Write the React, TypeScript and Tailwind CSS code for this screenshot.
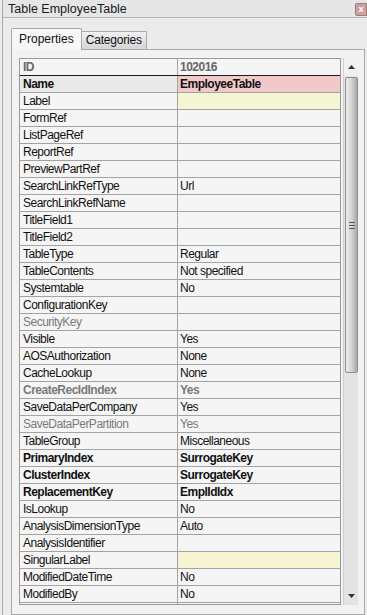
import React from "react";

type Row = {
  name: string;
  value?: string;
  bold?: boolean;
  dim?: boolean;
  bg?: string;
  header?: boolean;
};

const rows: Row[] = [
  { name: "ID", value: "102016", header: true },
  { name: "Name", value: "EmployeeTable", bold: true, bg: "pink" },
  { name: "Label", bg: "yellow" },
  { name: "FormRef" },
  { name: "ListPageRef" },
  { name: "ReportRef" },
  { name: "PreviewPartRef" },
  { name: "SearchLinkRefType", value: "Url" },
  { name: "SearchLinkRefName" },
  { name: "TitleField1" },
  { name: "TitleField2" },
  { name: "TableType", value: "Regular" },
  { name: "TableContents", value: "Not specified" },
  { name: "Systemtable", value: "No" },
  { name: "ConfigurationKey" },
  { name: "SecurityKey", dim: true },
  { name: "Visible", value: "Yes" },
  { name: "AOSAuthorization", value: "None" },
  { name: "CacheLookup", value: "None" },
  { name: "CreateRecIdIndex", value: "Yes", bold: true, dim: true },
  { name: "SaveDataPerCompany", value: "Yes" },
  { name: "SaveDataPerPartition", value: "Yes", dim: true },
  { name: "TableGroup", value: "Miscellaneous" },
  { name: "PrimaryIndex", value: "SurrogateKey", bold: true },
  { name: "ClusterIndex", value: "SurrogateKey", bold: true },
  { name: "ReplacementKey", value: "EmplIdIdx", bold: true },
  { name: "IsLookup", value: "No" },
  { name: "AnalysisDimensionType", value: "Auto" },
  { name: "AnalysisIdentifier" },
  { name: "SingularLabel", bg: "yellow" },
  { name: "ModifiedDateTime", value: "No" },
  { name: "ModifiedBy", value: "No" },
  { name: "ModifiedTransactionId", value: "No" },
];

function PropRow({ row }: { row: Row }) {
  // text colour / weight for both cells
  let tone = "text-[#111]";
  if (row.dim) tone = "text-[#7a7a7a]";
  if (row.header) tone = "text-[#666] font-bold";
  const weight = row.bold ? "font-bold" : "";

  let valueBg = "bg-[#f5f5f5]";
  if (row.bg === "pink") valueBg = "bg-[#f1c9c9]";
  if (row.bg === "yellow") valueBg = "bg-[#f5f5d3]";

  const border = row.header ? "border-b border-b-[#1a1a1a]" : "border-b border-b-[#a3a3a3]";

  return (
    <div className={`flex h-[17px] shrink-0 ${border}`}>
      <div
        className={`w-[158px] shrink-0 border-r border-r-[#a3a3a3] pl-[3px] leading-[16px] whitespace-nowrap overflow-hidden ${
          row.name === "Name" ? "bg-[#e9e9e9]" : "bg-[#f5f5f5]"
        } ${tone} ${weight}`}
      >
        {row.name}
      </div>
      <div className={`flex-1 pl-[2px] leading-[16px] whitespace-nowrap overflow-hidden ${valueBg} ${tone} ${weight}`}>
        {row.value}
      </div>
    </div>
  );
}

function ScrollBar() {
  return (
    <div className="w-[15px] ml-[2px] h-full flex flex-col bg-[#e3e3e3] border-l border-l-[#d0d0d0]">
      {/* up arrow */}
      <div className="h-[18px] shrink-0 flex items-center justify-center bg-[#f0f0f0]">
        <svg width="7" height="4" viewBox="0 0 7 4">
          <path d="M0 4 L3.5 0 L7 4 Z" fill="#333" />
        </svg>
      </div>
      {/* thumb */}
      <div className="h-[296px] shrink-0 mt-[1px] ml-[1px] border border-[#8f8f8f] rounded-[2px] bg-gradient-to-r from-[#ececec] via-[#d4d4d4] to-[#a9a9a9] flex items-center justify-center">
        <div className="flex flex-col gap-[2px]">
          <div className="w-[6px] h-px bg-[#555]" />
          <div className="w-[6px] h-px bg-[#555]" />
          <div className="w-[6px] h-px bg-[#555]" />
        </div>
      </div>
      <div className="flex-1" />
      {/* down arrow */}
      <div className="h-[18px] shrink-0 flex items-center justify-center">
        <svg width="7" height="4" viewBox="0 0 7 4">
          <path d="M0 0 L7 0 L3.5 4 Z" fill="#333" />
        </svg>
      </div>
    </div>
  );
}

export default function App() {
  return (
    <div
      className="w-[367px] h-[615px] overflow-hidden bg-[#ebebeb] flex flex-col text-[12px] text-[#111]"
      style={{ fontFamily: '"Liberation Sans", Arial, sans-serif' }}
    >
      <div className="flex-1 flex flex-col ml-[2px] border-l border-l-[#a8a8a8]">
        {/* TITLE BAR */}
        <div className="h-[18px] shrink-0 flex items-center justify-between bg-[#e6e6e6] border-b border-b-[#b5b5b5] pl-[5px]">
          <span className="leading-[16px] text-[12.5px] text-[#1a1a1a]">Table EmployeeTable</span>
          <div className="w-[12px] h-[13px] mt-[1px] bg-[#c9a2a2] border border-[#a07878] rounded-l-[2px] flex items-center justify-center text-[9px] leading-none text-white font-bold">
            x
          </div>
        </div>

        {/* TABS */}
        <div className="flex items-end pl-[8px] mt-[10px] h-[21px] shrink-0">
          <div className="h-[22px] px-[7px] bg-[#f6f6f6] border border-[#a9a9a9] border-b-0 rounded-t-[2px] leading-[20px] text-[#111] relative z-10 -mb-px">
            Properties
          </div>
          <div className="h-[18px] px-[4px] bg-gradient-to-b from-[#f1f1f1] to-[#d5d5d5] border border-[#a9a9a9] border-b-0 border-l-0 leading-[17px] text-[#111] tracking-[-0.2px]">
            Categories
          </div>
        </div>

        {/* PANEL */}
        <div className="flex-1 ml-[8px] mr-[2px] bg-[#f2f2f2] border border-[#a9a9a9] pt-[8px] pl-[7px] pr-[6px] pb-[8px] flex">
          <div className="w-[322px] h-[547px] border border-[#9a9a9a] flex flex-col overflow-hidden bg-[#f5f5f5] tracking-[-0.5px]">
            {rows.map((r) => (
              <PropRow key={r.name} row={r} />
            ))}
          </div>
          <div className="h-[547px]">
            <ScrollBar />
          </div>
        </div>
      </div>
    </div>
  );
}
